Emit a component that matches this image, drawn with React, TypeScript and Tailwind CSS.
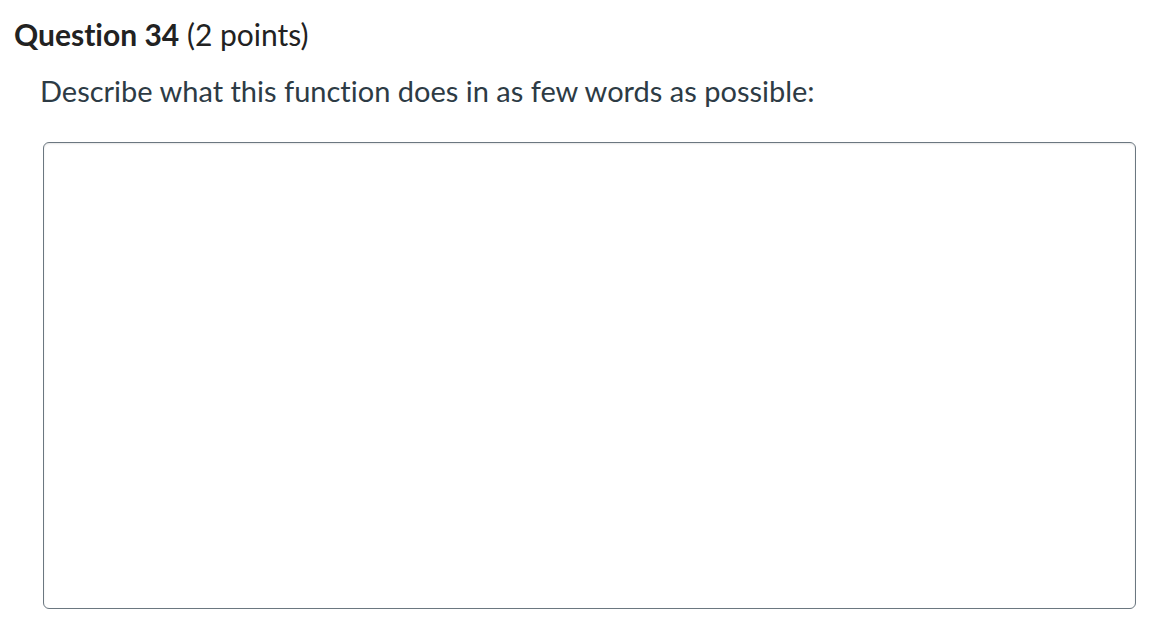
export default function App() {
  return (
    <div className="w-[1156px] h-[622px] bg-white font-['Lato',sans-serif] text-[#2d3b45] [font-variant-ligatures:none]">
      <div className="pl-[14px] pt-[15px]">
        <h2 className="text-[30px] leading-[38px] text-[#222]">
          <span className="font-bold">Question 34</span> <span>(2 points)</span>
        </h2>
      </div>
      <div className="pl-[40px] pt-[20px]">
        <p className="text-[29px] leading-[36px] text-[#2d3b45]">
          Describe what this function does in as few words as possible:
        </p>
      </div>
      <div className="pl-[43px] pr-[20px] pt-[33px]">
        <textarea
          className="block w-[1093px] h-[467px] rounded-[6px] border border-[#6b7780] bg-white shadow-[inset_0_1px_2px_rgba(0,0,0,0.1)] resize-none outline-none"
          aria-label="answer"
        />
      </div>
    </div>
  );
}
